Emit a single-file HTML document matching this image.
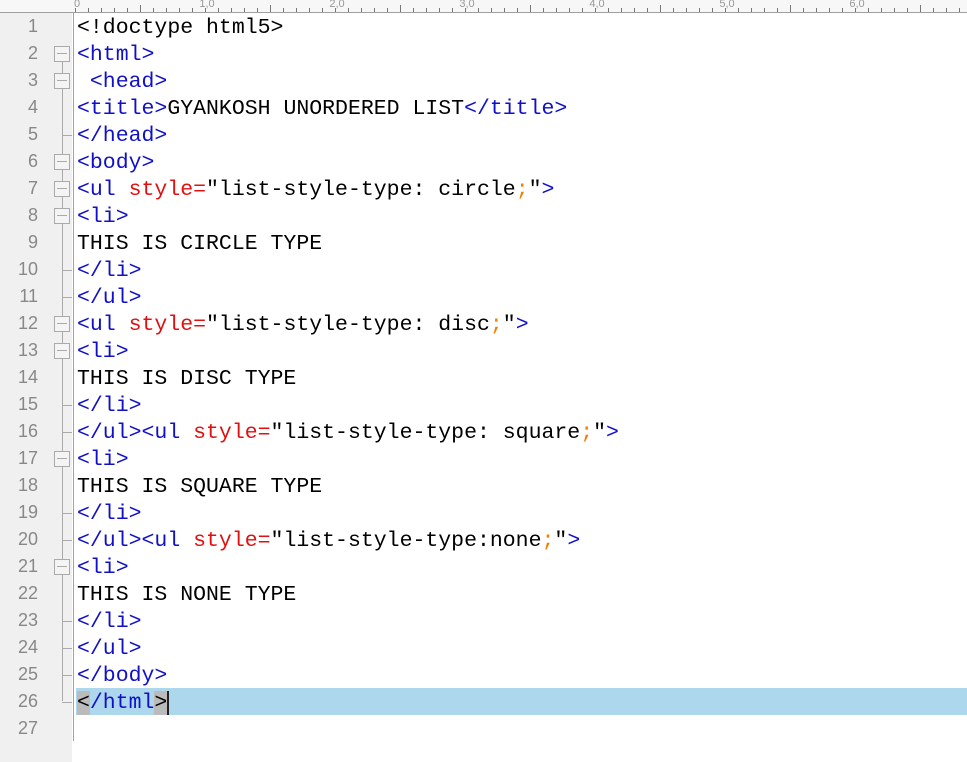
<!DOCTYPE html>
<html><head><meta charset="utf-8"><style>
html,body{margin:0;padding:0;width:967px;height:762px;overflow:hidden;background:#fff;font-family:"Liberation Mono",monospace}
#gut{position:absolute;left:0;top:13px;width:72px;height:749px;background:#f0f0f0}
#ruler{position:absolute;left:0;top:0;width:967px;height:12px;background:#f7f7f7;border-bottom:1px solid #a0a0a0}
.tk{position:absolute;bottom:0;height:4px;left:75px;right:0;background:repeating-linear-gradient(90deg,#777 0 1px,transparent 1px 13px)}
.tk2{position:absolute;bottom:0;height:7px;left:140px;right:0;background:repeating-linear-gradient(90deg,#777 0 1px,transparent 1px 130px)}
.rl{position:absolute;top:-2px;font:11px "Liberation Sans",sans-serif;color:#999;transform:translateX(-50%)}
#green{position:absolute;left:73px;top:13px;width:1px;height:728px;background:#5fd35f}
#hl{position:absolute;left:76px;top:688px;width:891px;height:27px;background:#acd7ec}
.ln{position:absolute;left:0;width:38px;text-align:right;font:18px "Liberation Sans",sans-serif;color:#888;height:27px;line-height:27px}
.cd{position:absolute;left:77px;font-size:21.5px;height:27px;line-height:27px;white-space:pre;color:#000}
.b{color:#1010c8}.r{color:#e01010}.o{color:#f08000}
.box{position:absolute;left:54px;width:16px;height:16px;border:1px solid #aaa;background:#f4f4f4;box-sizing:border-box}
.box::after{content:"";position:absolute;left:2px;right:2px;top:6px;height:1px;background:#aaa}
.vl{position:absolute;left:62px;width:1px;background:#aaa}
.tick{position:absolute;left:62px;width:10px;height:1px;background:#aaa}
</style></head><body>
<div id="ruler"><div class="tk"></div><div class="tk2"></div>
<span class="rl" style="left:77px">0</span><span class="rl" style="left:207px">1,0</span><span class="rl" style="left:337px">2,0</span><span class="rl" style="left:467px">3,0</span><span class="rl" style="left:597px">4,0</span><span class="rl" style="left:727px">5,0</span><span class="rl" style="left:857px">6,0</span></div>
<div id="gut"></div>
<div id="hl"></div>
<div id="green"></div>
<div id="nums"></div>
<script>
var L=[
'&lt;!doctype html5&gt;',
'<span class=b>&lt;html&gt;</span>',
' <span class=b>&lt;head&gt;</span>',
'<span class=b>&lt;title&gt;</span>GYANKOSH UNORDERED LIST<span class=b>&lt;/title&gt;</span>',
'<span class=b>&lt;/head&gt;</span>',
'<span class=b>&lt;body&gt;</span>',
'<span class=b>&lt;ul </span><span class=r>style=</span>"list-style-type: circle<span class=o>;</span>"<span class=b>&gt;</span>',
'<span class=b>&lt;li&gt;</span>',
'THIS IS CIRCLE TYPE',
'<span class=b>&lt;/li&gt;</span>',
'<span class=b>&lt;/ul&gt;</span>',
'<span class=b>&lt;ul </span><span class=r>style=</span>"list-style-type: disc<span class=o>;</span>"<span class=b>&gt;</span>',
'<span class=b>&lt;li&gt;</span>',
'THIS IS DISC TYPE',
'<span class=b>&lt;/li&gt;</span>',
'<span class=b>&lt;/ul&gt;&lt;ul </span><span class=r>style=</span>"list-style-type: square<span class=o>;</span>"<span class=b>&gt;</span>',
'<span class=b>&lt;li&gt;</span>',
'THIS IS SQUARE TYPE',
'<span class=b>&lt;/li&gt;</span>',
'<span class=b>&lt;/ul&gt;&lt;ul </span><span class=r>style=</span>"list-style-type:none<span class=o>;</span>"<span class=b>&gt;</span>',
'<span class=b>&lt;li&gt;</span>',
'THIS IS NONE TYPE',
'<span class=b>&lt;/li&gt;</span>',
'<span class=b>&lt;/ul&gt;</span>',
'<span class=b>&lt;/body&gt;</span>',
'<span style="background:#bbb">&lt;</span><span class=b>/html</span><span style="background:#bbb">&gt;</span><span style="border-left:2px solid #222"></span>',
''];
var h='';
h+='<div class="vl" style="top:60px;height:641px"></div>';
for(var i=0;i<27;i++){var t=13+i*27;
h+='<div class="ln" style="top:'+t+'px">'+(i+1)+'</div>';
h+='<div class="cd" style="top:'+(t+2)+'px">'+L[i]+'</div>';}
[2,3,6,7,8,12,13,17,21].forEach(function(n){h+='<div class="box" style="top:'+(13+(n-1)*27+6)+'px"></div>'});
[5,10,11,15,16,19,20,23,24,25,26].forEach(function(n){h+='<div class="tick" style="top:'+(13+(n-1)*27+14)+'px"></div>'});
document.getElementById('nums').innerHTML=h;
</script>
</body></html>
